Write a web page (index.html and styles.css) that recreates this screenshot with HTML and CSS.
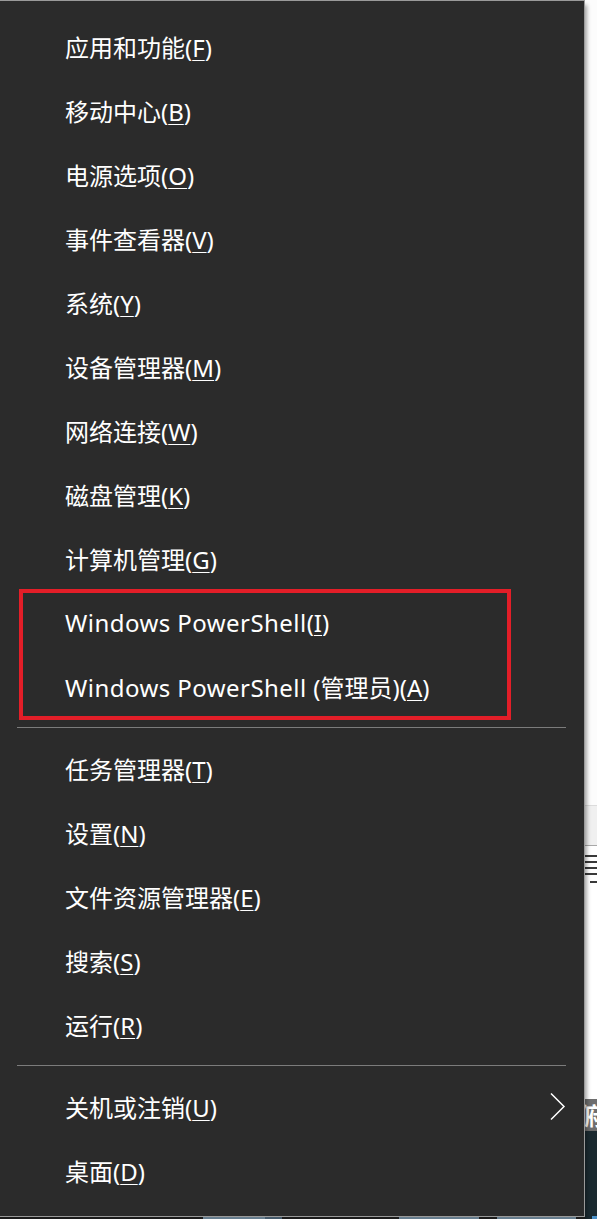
FILE: index.html
```html
<!DOCTYPE html>
<html lang="zh-CN">
<head>
<meta charset="utf-8">
<title>Win+X 菜单</title>
<link rel="stylesheet" href="styles.css">
</head>
<body>
<div class="stage">
  <div class="left">
    <nav class="menu">
      <div class="group">
        <div class="item"><span class="label">应用和功能(<u>F</u>)</span></div>
        <div class="item"><span class="label">移动中心(<u>B</u>)</span></div>
        <div class="item"><span class="label">电源选项(<u>O</u>)</span></div>
        <div class="item"><span class="label">事件查看器(<u>V</u>)</span></div>
        <div class="item"><span class="label">系统(<u>Y</u>)</span></div>
        <div class="item"><span class="label">设备管理器(<u>M</u>)</span></div>
        <div class="item"><span class="label">网络连接(<u>W</u>)</span></div>
        <div class="item"><span class="label">磁盘管理(<u>K</u>)</span></div>
        <div class="item"><span class="label">计算机管理(<u>G</u>)</span></div>
        <div class="highlight">
          <div class="item"><span class="label"><span class="lat">Windows PowerShell</span>(<u>I</u>)</span></div>
          <div class="item"><span class="label"><span class="lat">Windows PowerShell </span>(管理员)(<u>A</u>)</span></div>
        </div>
      </div>
      <div class="sep"></div>
      <div class="group">
        <div class="item"><span class="label">任务管理器(<u>T</u>)</span></div>
        <div class="item"><span class="label">设置(<u>N</u>)</span></div>
        <div class="item"><span class="label">文件资源管理器(<u>E</u>)</span></div>
        <div class="item"><span class="label">搜索(<u>S</u>)</span></div>
        <div class="item"><span class="label">运行(<u>R</u>)</span></div>
      </div>
      <div class="sep"></div>
      <div class="group">
        <div class="item"><span class="label">关机或注销(<u>U</u>)</span><svg class="chev" width="16" height="28" viewBox="0 0 16 28"><polyline points="1,0.5 14,13.5 1,26.5" fill="none" stroke="#ffffff" stroke-width="1.5"/></svg></div>
        <div class="item"><span class="label">桌面(<u>D</u>)</span></div>
      </div>
    </nav>
    <div class="taskbar">
      <span class="tb-gap g1"></span><span class="tb-seg s1"></span><span class="tb-seg s2"></span>
      <span class="tb-gap g2"></span><span class="tb-seg s3"></span>
      <span class="tb-gap g3"></span><span class="tb-seg s4"></span>
    </div>
  </div>
  <div class="behind">
    <div class="bh-white"></div>
    <div class="bh-bar"></div>
    <div class="bh-doc">
      <span class="ln"></span><span class="ln"></span><span class="ln"></span><span class="ln"></span><span class="ln short"></span>
    </div>
    <div class="bh-title"><span class="bh-text">俯</span></div>
    <div class="bh-dark"><span class="bh-blue"></span></div>
  </div>
</div>
</body>
</html>
```

FILE: styles.css
```css
html, body {
  margin: 0;
  padding: 0;
}
body {
  width: 597px;
  height: 1219px;
  overflow: hidden;
  background: #ffffff;
  font-family: "Noto Sans", "Noto Sans CJK SC", sans-serif;
}
.stage {
  display: flex;
  width: 597px;
  height: 1219px;
}
.left {
  width: 585px;
  display: flex;
  flex-direction: column;
  position: relative;
  z-index: 2;
}
.menu {
  box-sizing: border-box;
  width: 585px;
  height: 1217px;
  background: #2b2b2b;
  border-top: 1px solid #9a9a9a;
  border-right: 1px solid #9a9a9a;
  border-bottom: 1px solid #9a9a9a;
  padding: 14px 0 13px 0;
  box-shadow: 2px 5px 4px rgba(0, 0, 0, 0.35);
  color: #ffffff;
}
.group {
  display: flex;
  flex-direction: column;
}
.item {
  height: 64px;
  display: flex;
  align-items: center;
  padding-left: 65px;
  padding-bottom: 2px;
  box-sizing: border-box;
  font-size: 24px;
  position: relative;
}
.label {
  white-space: pre;
}
.lat {
  letter-spacing: 0.45px;
}
.label u {
  text-decoration: underline;
  text-decoration-thickness: 1px;
  text-underline-offset: 3px;
}
.chev {
  margin-left: auto;
  margin-right: 18px;
  margin-top: 2px;
  flex-shrink: 0;
}
.highlight {
  position: relative;
}
.highlight::after {
  content: "";
  position: absolute;
  left: 19px;
  top: -2px;
  width: 492px;
  height: 131px;
  box-sizing: border-box;
  border: 4px solid #e31e28;
  pointer-events: none;
}
.sep {
  height: 1px;
  margin: 8px 18px 9px 17px;
  background: #7c7c7c;
}
.taskbar {
  height: 2px;
  display: flex;
  background: #1b1b1b;
}
.tb-gap { display: block; height: 2px; }
.tb-seg { display: block; height: 2px; }
.g1 { width: 203px; }
.s1 { width: 62px; background: #667d8e; }
.s2 { width: 17px; background: #44596a; }
.g2 { width: 117px; }
.s3 { width: 80px; background: #667d8e; }
.g3 { width: 18px; }
.s4 { width: 79px; background: #667d8e; }

.behind {
  width: 12px;
  height: 1219px;
  display: flex;
  flex-direction: column;
  overflow: hidden;
  position: relative;
  z-index: 1;
}
.bh-white {
  height: 805px;
  background: #fcfcfc;
}
.bh-bar {
  height: 39px;
  background: #f0f0f0;
  border-top: 1px solid #dcdcdc;
  border-bottom: 1px solid #a8a8a8;
}
.bh-doc {
  height: 253px;
  background: #ffffff;
  display: flex;
  flex-direction: column;
  gap: 4px;
  padding-top: 9px;
  box-sizing: border-box;
}
.ln {
  display: block;
  height: 2px;
  background: #3a3a3a;
}
.ln.short {
  margin-top: 2px;
  margin-left: 5px;
}
.bh-title {
  height: 32px;
  background: #6e6e6e;
  display: flex;
  align-items: center;
  overflow: hidden;
}
.bh-text {
  color: #ffffff;
  font-family: "Noto Sans CJK SC", sans-serif;
  font-size: 24px;
  font-weight: 700;
  margin-left: -6px;
  line-height: 1;
}
.bh-dark {
  flex: 1;
  background: #1b2a30;
  position: relative;
}
.bh-blue {
  position: absolute;
  right: 0;
  bottom: 0;
  width: 5px;
  height: 3px;
  background: #4a90c8;
}
```
